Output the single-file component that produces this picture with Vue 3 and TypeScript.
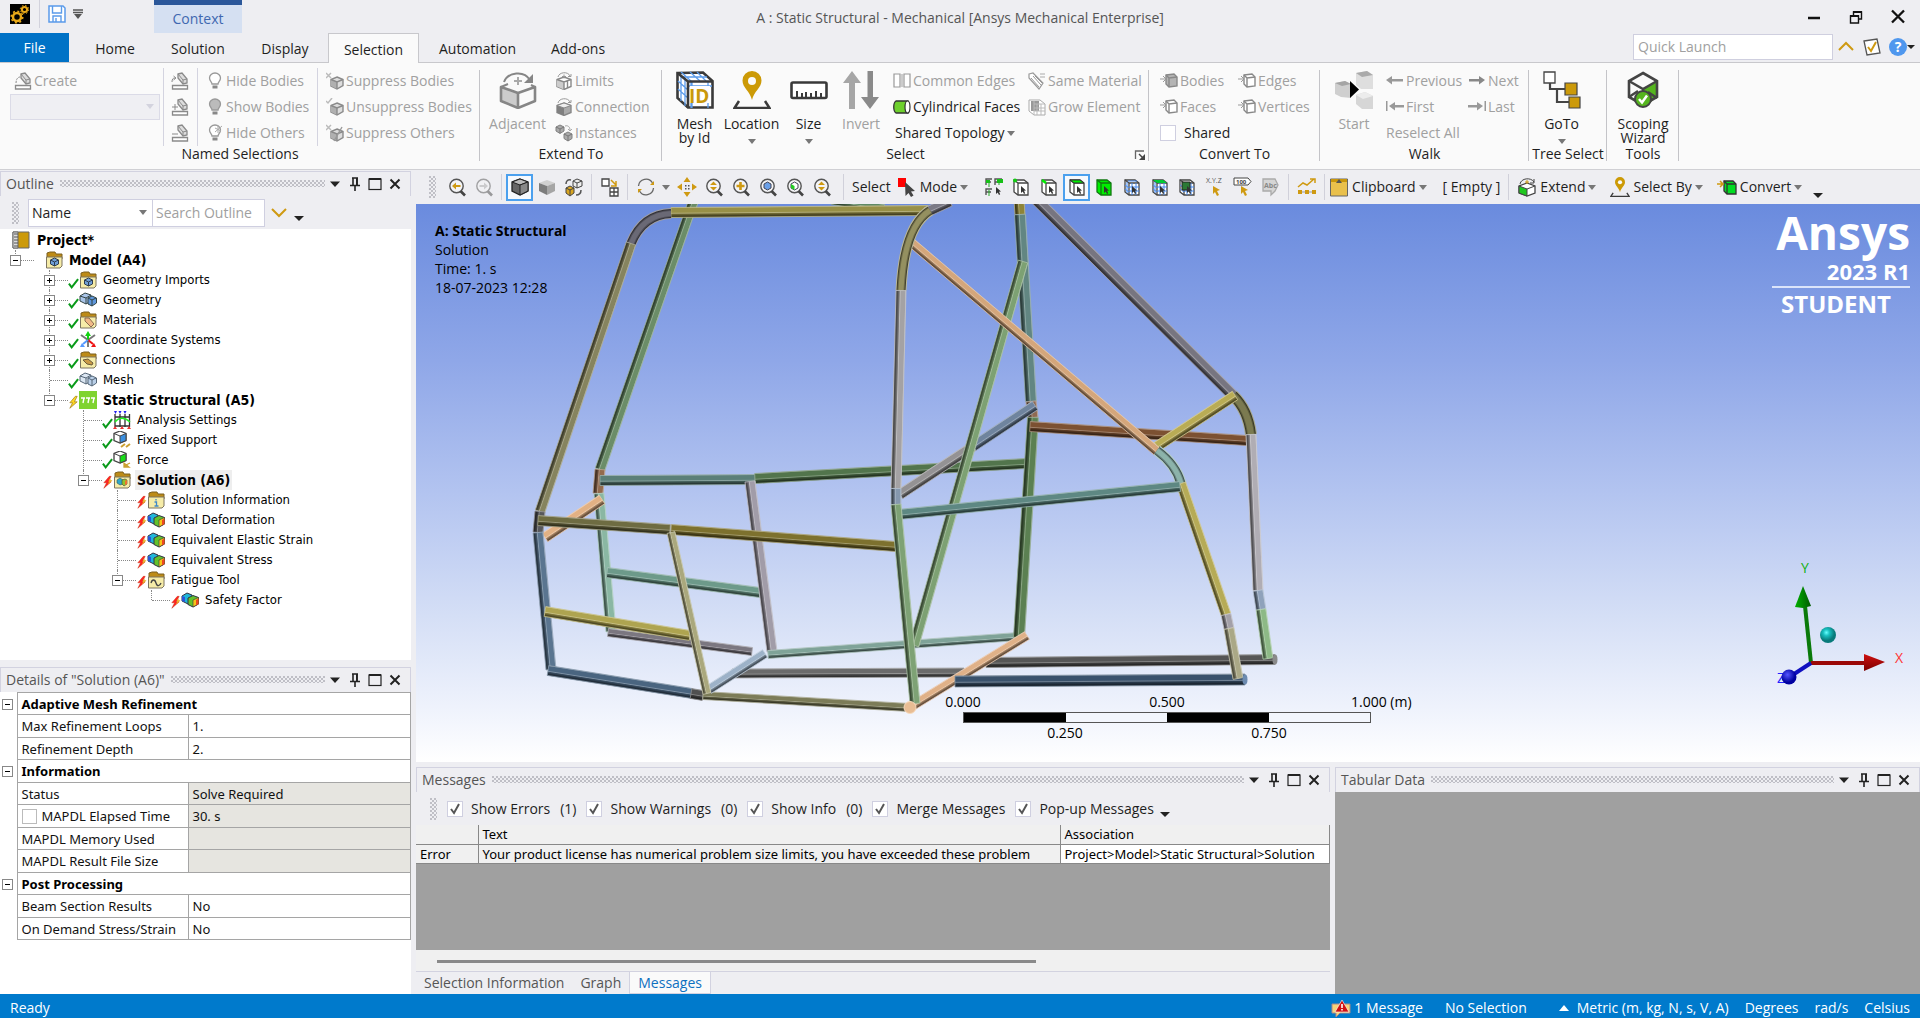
<script setup lang="ts">
import { ref } from 'vue'

interface TreeRow {
  label: string
  level: number
  icon: string
  status?: 'ok' | 'bolt' | 'pend'
  exp?: '+' | '-'
  last?: boolean
  bold?: boolean
  selected?: boolean
}

const tree: TreeRow[] = [
  { label: 'Model (A4)', level: 1, icon: 'folder-cube', exp: '-', last: true, bold: true },
  { label: 'Geometry Imports', level: 2, icon: 'folder-cube', status: 'ok', exp: '+' },
  { label: 'Geometry', level: 2, icon: 'geom', status: 'ok', exp: '+' },
  { label: 'Materials', level: 2, icon: 'folder-mat', status: 'ok', exp: '+' },
  { label: 'Coordinate Systems', level: 2, icon: 'coord', status: 'ok', exp: '+' },
  { label: 'Connections', level: 2, icon: 'folder-conn', status: 'ok', exp: '+' },
  { label: 'Mesh', level: 2, icon: 'mesh', status: 'ok' },
  { label: 'Static Structural (A5)', level: 2, icon: 'static', status: 'pend', exp: '-', last: true, bold: true },
  { label: 'Analysis Settings', level: 3, icon: 'settings', status: 'ok' },
  { label: 'Fixed Support', level: 3, icon: 'fixed', status: 'ok' },
  { label: 'Force', level: 3, icon: 'force', status: 'ok' },
  { label: 'Solution (A6)', level: 3, icon: 'folder-sol', status: 'bolt', exp: '-', last: true, bold: true, selected: true },
  { label: 'Solution Information', level: 4, icon: 'folder-info', status: 'bolt' },
  { label: 'Total Deformation', level: 4, icon: 'result', status: 'bolt' },
  { label: 'Equivalent Elastic Strain', level: 4, icon: 'result', status: 'bolt' },
  { label: 'Equivalent Stress', level: 4, icon: 'result', status: 'bolt' },
  { label: 'Fatigue Tool', level: 4, icon: 'folder-fat', status: 'bolt', exp: '-', last: true },
  { label: 'Safety Factor', level: 5, icon: 'result', status: 'bolt', last: true },
]

interface Detail { label: string; value?: string; group?: boolean; ro?: boolean; check?: boolean }
const details: Detail[] = [
  { label: 'Adaptive Mesh Refinement', group: true },
  { label: 'Max Refinement Loops', value: '1.' },
  { label: 'Refinement Depth', value: '2.' },
  { label: 'Information', group: true },
  { label: 'Status', value: 'Solve Required', ro: true },
  { label: 'MAPDL Elapsed Time', value: '30. s', ro: true, check: true },
  { label: 'MAPDL Memory Used', value: '', ro: true },
  { label: 'MAPDL Result File Size', value: '', ro: true },
  { label: 'Post Processing', group: true },
  { label: 'Beam Section Results', value: 'No' },
  { label: 'On Demand Stress/Strain', value: 'No' },
]

const tabs = ['Home', 'Solution', 'Display', 'Selection', 'Automation', 'Add-ons']
const activeTab = ref('Selection')

const filters = ref([
  { label: 'Show Errors', count: '(1)', on: true },
  { label: 'Show Warnings', count: '(0)', on: true },
  { label: 'Show Info', count: '(0)', on: true },
  { label: 'Merge Messages', count: '', on: true },
  { label: 'Pop-up Messages', count: '', on: true },
])

const pickIcons = ['f-multi', 'f-vertex', 'f-edge', 'f-face', 'f-body', 'f-node', 'f-elface', 'f-elem', 'f-xyz', 'f-label', 'f-abc']

type RGB = [number, number, number]
interface Tube { a: [number, number]; b: [number, number]; w: number; c: string; mid?: [number, number] }

const t = (x1: number, y1: number, x2: number, y2: number, c: string, w = 10): Tube => ({ a: [x1, y1], b: [x2, y2], c, w })
const bend = (x1: number, y1: number, cx: number, cy: number, x2: number, y2: number, c: string, w = 10): Tube => ({ a: [x1, y1], b: [x2, y2], mid: [cx, cy], c, w })

/* Frame members, listed from the farthest to the nearest. */
const tubes: Tube[] = [
  t(694, 200, 600, 470, '#6b8d68'),
  t(832, 201, 884, 209, '#5f8a66', 8),
  t(600, 470, 598, 494, '#936b4e'),
  t(599, 494, 611, 632, '#8ab7a3'),
  t(608, 633, 752, 652, '#7b7780', 8),
  t(600, 481, 755, 480, '#5b7f78'),
  t(755, 479, 1026, 464, '#52754c'),
  t(607, 573, 760, 593, '#6d9a8a'),
  t(750, 482, 772, 652, '#a19ca8'),
  t(768, 655, 1018, 637, '#7fa398', 8),
  t(732, 674, 964, 673, '#6b6b6b', 9),
  t(545, 538, 602, 500, '#e2b184'),
  t(1019, 200, 1020, 215, '#8d8438'),
  t(1020, 215, 1031, 402, '#628682', 11),
  t(1031, 402, 1033, 418, '#8e6a52'),
  t(1033, 418, 1019, 638, '#5b8052', 11),
  t(1030, 427, 1247, 441, '#7c5132'),
  t(1036, 200, 1233, 396, '#777580', 11),
  t(973, 447, 1035, 406, '#6f849e'),
  t(900, 495, 973, 447, '#949294'),
  t(1023, 262, 914, 646, '#7da173'),
  t(986, 663, 1275, 660, '#565656', 10),
  t(910, 708, 1027, 636, '#e0b188', 9),
  t(955, 682, 1245, 680, '#3a526c', 11),
  bend(1233, 396, 1248, 410, 1251, 435, '#7b7a50', 11),
  t(1251, 435, 1258, 591, '#b0adb4'),
  t(1258, 591, 1261, 610, '#8fa2bb'),
  t(1261, 610, 1268, 659, '#8db986'),
  t(1157, 447, 1235, 396, '#b9ac55'),
  t(910, 242, 1157, 452, '#d4a67b', 9),
  bend(1157, 451, 1176, 465, 1181, 484, '#8cb3aa'),
  t(1181, 484, 1226, 615, '#b6ab57'),
  t(1226, 615, 1229, 629, '#a3a0a8'),
  t(1229, 629, 1238, 679, '#aaa886'),
  t(898, 515, 1180, 487, '#5e8883'),
  t(671, 213, 928, 211, '#989047'),
  bend(671, 214, 643, 215, 631, 244, '#6a6975'),
  t(631, 244, 540, 512, '#86845f'),
  t(540, 512, 538, 533, '#57585c'),
  t(538, 533, 551, 670, '#5a7590'),
  t(548, 671, 692, 694, '#4a6580'),
  t(691, 694, 703, 696, '#505050'),
  t(703, 696, 909, 708, '#7c7c58', 8),
  t(538, 521, 670, 530, '#6e6c42'),
  t(671, 530, 896, 547, '#7d712e'),
  t(545, 612, 690, 636, '#aea450'),
  t(709, 690, 765, 654, '#9db2c8', 9),
  t(671, 533, 707, 694, '#aaa87d', 8),
  t(926, 213, 950, 202, '#7b7a86'),
  bend(930, 211, 904, 227, 901, 291, '#949060'),
  t(901, 291, 896, 489, '#a4a2a4'),
  t(896, 489, 896, 505, '#8598ae'),
  t(896, 505, 915, 704, '#7ea275'),
]

const rgb = (h: string): RGB => [1, 3, 5].map((i) => parseInt(h.slice(i, i + 2), 16)) as RGB
const shade = (h: string, f: number): string => {
  const [r, g, b] = rgb(h).map((v) => Math.round(f < 1 ? v * f : v + (255 - v) * (f - 1)))
  return `rgb(${r},${g},${b})`
}

const members = tubes.map((m, i) => {
  const dx = m.b[0] - m.a[0]
  const dy = m.b[1] - m.a[1]
  const len = Math.hypot(dx, dy)
  let nx = -dy / len
  let ny = dx / len
  if (nx - ny < 0) { nx = -nx; ny = -ny }
  const h = m.w / 2
  return {
    id: `tube${i}`,
    w: m.w,
    curve: m.mid ? `M${m.a[0]} ${m.a[1]}Q${m.mid[0]} ${m.mid[1]} ${m.b[0]} ${m.b[1]}` : '',
    poly: [
      [m.a[0] + nx * h, m.a[1] + ny * h], [m.b[0] + nx * h, m.b[1] + ny * h],
      [m.b[0] - nx * h, m.b[1] - ny * h], [m.a[0] - nx * h, m.a[1] - ny * h],
    ].map((p) => p.map((v) => v.toFixed(1)).join(',')).join(' '),
    g1: [m.a[0] - nx * h, m.a[1] - ny * h],
    g2: [m.a[0] + nx * h, m.a[1] + ny * h],
    main: m.c,
    dark: shade(m.c, 0.46),
    mid: shade(m.c, 0.75),
    lite: shade(m.c, 1.28),
    edge: shade(m.c, 1.35),
  }
})
</script>

<template>
  <div class="app">
    <svg class="defs" aria-hidden="true">
      <symbol id="ns-base" viewBox="0 0 18 18"><path d="M1.500 13.500h15v3.500h-15Z" fill="#fff" stroke="#8a8a8a" stroke-width="1.300" /><path d="M7 2l4-1 5 6v4l-4 1-5-6Z" fill="#ddd" stroke="#8a8a8a" stroke-width="1.300" /><path d="M7 2l5 6 4-1M12 8v4" stroke="#8a8a8a" fill="none" /></symbol>
      <symbol id="ns-create" viewBox="0 0 18 18"><use href="#ns-base" width="18" height="18" /><path d="M2 11c0-4 2-6 4-6" stroke="#8a8a8a" fill="none" stroke-dasharray="2 1" /></symbol>
      <symbol id="ns-add1" viewBox="0 0 18 18"><use href="#ns-base" width="18" height="18" /><path d="M1 10c0-3 1-4 3-4M2.500 4l2.500 2-2.500 2" stroke="#8a8a8a" fill="none" /></symbol>
      <symbol id="ns-plus" viewBox="0 0 18 18"><use href="#ns-base" width="18" height="18" /><path d="M1 9h6M4 6v6" stroke="#8a8a8a" fill="none" /></symbol>
      <symbol id="ns-minus" viewBox="0 0 18 18"><use href="#ns-base" width="18" height="18" /><path d="M1 10h6" stroke="#8a8a8a" fill="none" /></symbol>
      <symbol id="bulb" viewBox="0 0 18 18"><path d="M6 12c0-2-2.500-3-2.500-6a5.500 5 0 0 1 11 0c0 3-2.500 4-2.500 6Z" fill="#fff" stroke="#999" stroke-width="1.300" /><path d="M6.500 13.500h5v3h-5Z" fill="#888" /></symbol>
      <symbol id="bulb-on" viewBox="0 0 18 18"><path d="M6 12c0-2-2.500-3-2.500-6a5.500 5 0 0 1 11 0c0 3-2.500 4-2.500 6Z" fill="#bbb" stroke="#999" stroke-width="1.300" /><path d="M6.500 13.500h5v3h-5Z" fill="#888" /></symbol>
      <symbol id="bulb-x" viewBox="0 0 18 18"><use href="#bulb" width="18" height="18" /><path d="M9 8l7-6M9 4l6 3M12 1v8" stroke="#aaa" /></symbol>
      <symbol id="sup-base" viewBox="0 0 18 18"><path d="M11 5l6 2.500v6L11 17l-6-3V7.500Z" fill="#ddd" stroke="#8a8a8a" stroke-width="1.400" /><path d="M5 7.500l6 2.500v7l-6-3Z" fill="#b0b0b0" /><path d="M5 7.500l6 2.500 6-2.500M11 10v7" fill="none" stroke="#8a8a8a" stroke-width="1.400" /></symbol>
      <symbol id="sup" viewBox="0 0 18 18"><use href="#sup-base" width="18" height="18" /><path d="M0 1l5 5M5 1L0 6" stroke="#bbb" stroke-width="1.500" /></symbol>
      <symbol id="unsup" viewBox="0 0 18 18"><use href="#sup-base" width="18" height="18" /><path d="M0 3l2 2 4-5" fill="none" stroke="#bbb" stroke-width="1.500" /></symbol>
      <symbol id="supo" viewBox="0 0 18 18"><use href="#sup-base" width="18" height="18" /><path d="M8 17l8-14" stroke="#999" stroke-width="1.400" /><path d="M0 1l5 5M5 1L0 6" stroke="#bbb" stroke-width="1.500" /></symbol>
      <symbol id="limits" viewBox="0 0 18 18"><path d="M9 5l7 2.500v7L9 17.500l-7-3v-7Z" fill="#fff" stroke="#888" stroke-width="1.400" /><path d="M2 7.500L9 10v7.500l-7-3Z" fill="#ccc" /><path d="M2 7.500L9 10l7-2.500M9 10v7M12.500 9v7" fill="none" stroke="#888" stroke-width="1.400" /><path d="M3 5c1-5 10-6 12-1M13 4.500h3V2M9 2.500v4M7 4.500h4" fill="none" stroke="#999" /></symbol>
      <symbol id="conn" viewBox="0 0 18 18"><path d="M9 5l7 2.500v7L9 17.500l-7-3v-7Z" fill="#aaa" stroke="#888" stroke-width="1.400" /><path d="M2 7.500L9 10v7.500l-7-3Z" fill="#808080" /><path d="M2 7.500L9 5l7 2.500L9 10Z" fill="#eee" stroke="#888" /><path d="M3 5c1-5 10-6 12-1M13 4.500h3V2" fill="none" stroke="#999" /></symbol>
      <symbol id="inst" viewBox="0 0 18 18"><path d="M5 1l4 2v4L5 9.500 1 7V3Z" fill="#aaa" stroke="#808080" /><path d="M13 8l4 2v4.500l-4 2.500-4-2.500V10Z" fill="#aaa" stroke="#808080" /><path d="M1 3l4 2 4-2M5 5v4M9 10l4 2 4-2M13 12v5" fill="none" stroke="#777" /><path d="M10 2c3-1 5 1 5 4M13 5l2 2 2-2" fill="none" stroke="#aaa" /></symbol>
      <symbol id="adj" viewBox="0 0 38 38"><path d="M2 16l17 6v15L2 30Z" fill="#ccc" /><path d="M2 16l17 6 17-6v14l-17 7L2 30Z" fill="none" stroke="#868686" stroke-width="2.600" stroke-linejoin="round" /><path d="M19 22v14" stroke="#868686" stroke-width="2.600" /><path d="M2 16l7-3M36 16l-4-2" stroke="#868686" stroke-width="2" /><path d="M5 11C9 1 25-1 31 9" fill="none" stroke="#868686" stroke-width="2" /><path d="M34 3v9h-9Z" fill="#868686" /><path d="M19 6v8M15 10h8" stroke="#aaa" stroke-width="2" /></symbol>
      <symbol id="loc" viewBox="0 0 38 38"><path d="M19 0a9.500 9.500 0 0 1 9.500 9.500C28.500 17 21 20 19 29 17 20 9.500 17 9.500 9.500A9.500 9.500 0 0 1 19 0Z" fill="#cc9a06" /><circle cx="19" cy="10" r="4" fill="#fafafa" /><path d="M6 30 1.500 37h35L32 30" fill="none" stroke="#3a3a3a" stroke-width="2.500" /></symbol>
      <symbol id="size" viewBox="0 0 38 38"><rect x="1.500" y="11.500" width="35" height="15.500" rx="1.500" fill="#fff" stroke="#3a3a3a" stroke-width="2.600" /><path d="M7 26v-6M12 26v-4M16 26v-5M21 26v-4M26 26v-6M31 26v-4" stroke="#3a3a3a" stroke-width="2" /></symbol>
      <symbol id="invert" viewBox="0 0 38 38"><path d="M10 0l9 12h-6v26H7V12H1Z" fill="#a6a6a6" /><path d="M28 38l9-12h-6V0h-5.500v26H19Z" fill="#8a8a8a" /></symbol>
      <symbol id="cedge" viewBox="0 0 18 18"><path d="M1 2h6v13H1ZM11 2h6v13h-6Z" fill="#fff" stroke="#999" stroke-width="1.200" /><path d="M8 2h2v13H8Z" fill="#ccc" /></symbol>
      <symbol id="cyl" viewBox="0 0 18 18"><path d="M3 3h12v12H3C0 13 0 5 3 3Z" fill="#6ed02d" stroke="#333" stroke-width="1.300" /><ellipse cx="14.500" cy="9" rx="2.500" ry="6" fill="#fff" stroke="#333" stroke-width="1.200" /></symbol>
      <symbol id="smat" viewBox="0 0 18 18"><path d="M1 2l4-1 10 10-4 6L1 6Z" fill="#fff" stroke="#999" stroke-width="1.200" /><path d="M3 6l8 9M5 4l8 9M7 4l7 7" stroke="#999" /><path d="M12 2h5M12 5h5" stroke="#aaa" /></symbol>
      <symbol id="grow" viewBox="0 0 18 18"><path d="M1 2h11l5 4v11H6L1 13Z" fill="#fff" stroke="#aaa" /><path d="M3 3h8v10H3Z" fill="#999" /><path d="M6 6h11M6 10h11M6 13h11M9 6v11M13 6v11M6 3v14" stroke="#bbb" fill="none" /></symbol>
      <symbol id="cv-body" viewBox="0 0 18 18"><path d="M6 3l8-1 3 3v9l-8 1-3-3Z" fill="#b4b4b4" stroke="#888" stroke-width="1.400" /><path d="M6 3l3 3 8-1M9 6v9" fill="none" stroke="#888" stroke-width="1.400" /><path d="M0 7h5M3 4l3 3-3 3" stroke="#999" fill="none" /></symbol>
      <symbol id="cv-wire" viewBox="0 0 18 18"><path d="M6 3l8-1 3 3v9l-8 1-3-3Z" fill="#fff" stroke="#888" stroke-width="1.400" /><path d="M6 3l3 3 8-1M9 6v9" fill="none" stroke="#888" stroke-width="1.400" /><path d="M0 7h5M3 4l3 3-3 3" stroke="#999" fill="none" /></symbol>
      <symbol id="start" viewBox="0 0 38 38"><path d="M0 12l10-2 6 3v14l-10-1-6-3Z" fill="#cfcfcf" /><path d="M0 12l10-2 6 3-9 2Z" fill="#a5a5a5" /><path d="M21 2l11-2 6 4v14H26l-5-4Z" fill="#dedede" /><path d="M21 2l11-2 6 4-11 2Z" fill="#aaa" /><path d="M21 24l9-3 8 4v13H27l-6-5Z" fill="#d6d6d6" /><path d="M21 24l9-3 8 4-10 3Z" fill="#ececec" /><path d="M15 10l9 8.500L15 27Z" fill="#000" /></symbol>
      <symbol id="a-left" viewBox="0 0 18 18"><path d="M0 8l6-4v3h11v2.500H6v3Z" fill="#999" /></symbol>
      <symbol id="a-right" viewBox="0 0 18 18"><path d="M17 8l-6-4v3H1v2.500h10v3Z" fill="#888" /></symbol>
      <symbol id="a-first" viewBox="0 0 18 18"><path d="M3 8l6-4v3h9v2.500H9v3ZM0 3h1.500v10H0Z" fill="#999" /></symbol>
      <symbol id="a-last" viewBox="0 0 18 18"><path d="M15 8L9 4v3H0v2.500h9v3ZM16.500 3H18v10h-1.500Z" fill="#999" /></symbol>
      <symbol id="goto" viewBox="0 0 38 38"><path d="M7 12v6h16M14 18v13h13" fill="none" stroke="#444" stroke-width="2.200" /><path d="M1 1h11v11H1Z" fill="#fff" stroke="#444" stroke-width="1.300" /><path d="M22 12h12v12H22ZM26 26h11v11H26Z" fill="#cc9a0a" stroke="#444" stroke-width="1.200" /></symbol>
      <symbol id="wiz" viewBox="0 0 38 38"><path d="M19 17l14-6v14l-7 7-7-5Z" fill="#55b51e" /><path d="M19 2l14 8v16l-14 8-14-8V10Z" fill="none" stroke="#444" stroke-width="2.600" /><path d="M5 10l14 8 14-8M19 18v8M5 26l9-6M24 21l9 6" fill="none" stroke="#444" stroke-width="2.400" /><circle cx="19" cy="28" r="8" fill="#55b51e" stroke="#444" stroke-width="2" /><path d="M15 28l3 3.500 5-7" fill="none" stroke="#fff" stroke-width="2.500" /></symbol>

      <symbol id="folder" viewBox="0 0 18 18"><path d="M2 2l3-1h5l1 2h6v5H2Z" fill="#bd8b17" stroke="#7d6120" /><path d="M1.500 6h15.500v9l-2 2H1.500Z" fill="#f6eca8" stroke="#7d7560" /></symbol>
      <symbol id="folder-cube" viewBox="0 0 18 18"><use href="#folder" width="18" height="18" /><path d="M9.500 7l4 2v4l-4 2-4-2V9Z" fill="#6f9fd8" stroke="#2e3d50" /><path d="M5.500 9l4 2 4-2M9.500 11v4" fill="none" stroke="#2e3d50" /></symbol>
      <symbol id="folder-mat" viewBox="0 0 18 18"><use href="#folder" width="18" height="18" /><path d="M6 7l4 0 5 6-3 3-6-6Z" fill="#f0b987" stroke="#8a6b50" /></symbol>
      <symbol id="folder-conn" viewBox="0 0 18 18"><use href="#folder" width="18" height="18" /><path d="M4 9l5-1 5 4-1 2-5-1Z" fill="#c99b48" stroke="#6b5b3a" /></symbol>
      <symbol id="folder-sol" viewBox="0 0 18 18"><use href="#folder" width="18" height="18" /><path d="M4 9l3-2 3 2v4l-3 1-3-2Z" fill="#2fa7c9" stroke="#355" stroke-width=".6" /><path d="M9 9l3-1 2 1v4l-3 2-2-2Z" fill="#8fc32d" stroke="#443" stroke-width=".6" /><path d="M12 10l2-1v4l-2 1Z" fill="#f07030" /></symbol>
      <symbol id="folder-info" viewBox="0 0 18 18"><use href="#folder" width="18" height="18" /><path d="M9 8v1.500M7.500 11H9.500v4M7.500 15h4" fill="none" stroke="#4088c8" stroke-width="1.300" /></symbol>
      <symbol id="folder-fat" viewBox="0 0 18 18"><use href="#folder" width="18" height="18" /><path d="M4 12c1-4 4-4 5 0s4 3 5 0" fill="none" stroke="#444" stroke-width="1.300" /></symbol>
      <symbol id="geom" viewBox="0 0 18 18"><path d="M1 5l5-3 6 2v6l-5 3-6-3Z" fill="#a9c4e8" stroke="#344" /><path d="M9 7l4-2 4.500 2v5L13 15l-4-2Z" fill="#5f97dd" stroke="#344" /><path d="M1 5l6 2 5-3M7 7v6M9 7l4 2 4-2M13 9v6" fill="none" stroke="#344" /></symbol>
      <symbol id="mesh" viewBox="0 0 18 18"><path d="M1 5l5-3 6 2v6l-5 3-6-3Z" fill="#dbe6f2" stroke="#567" /><path d="M9 7l4-2 4.500 2v5L13 15l-4-2Z" fill="#b9cfe8" stroke="#567" /><path d="M1 5l6 2 5-3M7 7v6M9 7l4 2 4-2M13 9v6" fill="none" stroke="#567" /></symbol>
      <symbol id="coord" viewBox="0 0 18 18"><path d="M9 9l-7-5M9 9l7-5" stroke="#777" stroke-width="2" /><path d="M9 10V3" stroke="#13d313" stroke-width="2" /><path d="M6 5l3-5 3 5Z" fill="#13d313" /><path d="M9 9l5 4" stroke="#e11" stroke-width="2" /><path d="M17 16h-5l3-4Z" fill="#e11" /><path d="M9 9l-5 4" stroke="#59f" stroke-width="2" /><path d="M1 16h5l-3-4Z" fill="#59f" /><path d="M9 10v6" stroke="#555" stroke-width="1.500" /></symbol>
      <symbol id="static" viewBox="0 0 18 18"><rect width="18" height="18" fill="#7fd32f" /><path d="M2 7h4M7 7h4M12 7h4M5 7l-1 5M10 7l-1 5M15 7l-1 5" stroke="#fff" stroke-width="1.400" fill="none" /></symbol>
      <symbol id="settings" viewBox="0 0 18 18"><path d="M2 3v13M7 3v13M12 3v13M16.500 3v13M2 6h15M2 15h15" stroke="#333" stroke-width="1.300" fill="none" /><path d="M2 11c4-5 10-5 15 0" stroke="#2e2" stroke-width="1.500" fill="none" /><path d="M1 0h3L2.500 3ZM5.500 0h3L7 3ZM10.500 0h3L12 3Z" fill="#22e" /><path d="M0 18l2-3 2 3ZM14 18l2-3 2 3ZM7 18l2-3 2 3Z" fill="#e33" /></symbol>
      <symbol id="fixed" viewBox="0 0 18 18"><path d="M7 0l6 2.500v7L7 12 1 9.500v-7Z" fill="#fff" stroke="#444" stroke-width="1.300" /><path d="M7 5l6-2.500v7L7 12Z" fill="#3a8fe0" stroke="#444" /><path d="M1 2.500L7 5" stroke="#444" /><path d="M8 16l4-3M13 16l4-3" stroke="#cba030" stroke-width="2" /></symbol>
      <symbol id="force" viewBox="0 0 18 18"><path d="M7 0l6 2.500v7L7 12 1 9.500v-7Z" fill="#fff" stroke="#444" stroke-width="1.300" /><path d="M7 5l6-2.500v7L7 12Z" fill="#19dd19" stroke="#444" /><path d="M1 2.500L7 5" stroke="#444" /><path d="M17 12l-4 2M11 12v4h5Z" stroke="#cba030" stroke-width="1.300" fill="#cba030" /></symbol>
      <symbol id="result" viewBox="0 0 18 18"><path d="M1 5l5-3 5 2v7l-4 2-6-3Z" fill="#1fb6d8" stroke="#334" /><path d="M1 5l3 1v5l-3-1Z" fill="#2756d8" /><path d="M7 7l5-2.500 5.500 2V13L12 16l-5-2.500Z" fill="#62c22a" stroke="#334" /><path d="M12 9l5.500-2.500V13L12 16Z" fill="#f5c518" stroke="#334" stroke-width=".6" /><path d="M15 9l2.500-1.500V13L15 14.500Z" fill="#ee4a20" /></symbol>
      <symbol id="st-ok" viewBox="0 0 12 18"><path d="M1 13l3 4 7-9" fill="none" stroke="#0a9a1a" stroke-width="2.200" /></symbol>
      <symbol id="st-bolt" viewBox="0 0 12 18"><path d="M8 5L2 12h3l-3 6 8-7H7l3-6Z" fill="#f22" stroke="#c33010" stroke-width=".5" /><path d="M9 8l-1 2h2l-3 3" stroke="#e8b020" fill="none" stroke-width="1.200" /></symbol>
      <symbol id="st-pend" viewBox="0 0 12 18"><path d="M8 5L2 12h3l-3 6 8-7H7l3-6Z" fill="#ffd820" stroke="#a08020" stroke-width=".8" /></symbol>

      <symbol id="pin" viewBox="0 0 18 18"><path d="M6 3h6M7 3v7M11 3v7M4 10.500h10M9 11v5" fill="none" stroke="#222" stroke-width="1.600" /><path d="M10 3h1.800v7H10Z" fill="#222" /></symbol>
      <symbol id="max" viewBox="0 0 18 18"><rect x="3" y="4" width="12" height="10.500" fill="none" stroke="#222" stroke-width="1.200" /><path d="M3 4h12" stroke="#222" stroke-width="2" /></symbol>
      <symbol id="close" viewBox="0 0 18 18"><path d="M4.500 4.500l9 9M13.500 4.500l-9 9" stroke="#222" stroke-width="2" /></symbol>
      <symbol id="tri" viewBox="0 0 18 18"><path d="M4 6.500h10L9 12Z" fill="#222" /></symbol>

      <symbol id="lens" viewBox="0 0 20 20"><circle cx="9.500" cy="9" r="6.700" fill="#f4f4f6" stroke="#555" stroke-width="1.400" /><path d="M13.500 14l4.500 4.500" stroke="#444" stroke-width="2.600" /></symbol>
      <symbol id="z-prev" viewBox="0 0 20 20"><use href="#lens" width="20" height="20" /><path d="M5 9l4-3.500V8h4.500v2H9v2.500Z" fill="#cf9a12" /></symbol>
      <symbol id="z-next" viewBox="0 0 20 20"><g opacity=".5"><use href="#lens" width="20" height="20" /><path d="M14 9l-4-3.500V8H5.500v2H10v2.500Z" fill="#aaa" /></g></symbol>
      <symbol id="z-zoom" viewBox="0 0 20 20"><use href="#lens" width="20" height="20" /><path d="M6 8l3.500-3.500L13 8ZM6 10h7l-3.500 3.500Z" fill="#cf9a12" /></symbol>
      <symbol id="z-in" viewBox="0 0 20 20"><use href="#lens" width="20" height="20" /><path d="M9.500 5v8M5.500 9h8" stroke="#cf9a12" stroke-width="2.600" /></symbol>
      <symbol id="z-fit" viewBox="0 0 20 20"><use href="#lens" width="20" height="20" /><path d="M9.500 5l3.500 2v4l-3.500 2L6 11V7Z" fill="#6aa0e8" stroke="#445" /></symbol>
      <symbol id="z-sel" viewBox="0 0 20 20"><use href="#lens" width="20" height="20" /><path d="M9.500 5l3.500 2v4l-3.500 2L6 11V7Z" fill="#fff" stroke="#445" /><path d="M6 7l3.500 2v4L6 11Z" fill="#2c2" /></symbol>
      <symbol id="v-shade" viewBox="0 0 20 20"><path d="M10 2l8 3v9l-8 4-8-4V5Z" fill="#666" stroke="#222" stroke-width="1.300" /><path d="M2 5l8 3 8-3-8-3Z" fill="#bbb" stroke="#222" /><path d="M10 8l8-3v9l-8 4Z" fill="#888" stroke="#222" /></symbol>
      <symbol id="v-solid" viewBox="0 0 20 20"><path d="M10 3l8 3-8 3-8-3Z" fill="#d0d0d0" /><path d="M2 6l8 3v9l-8-4Z" fill="#7c7c7c" /><path d="M18 6l-8 3v9l8-4Z" fill="#a5a5a5" /></symbol>
      <symbol id="v-iso" viewBox="0 0 20 20"><path d="M13 2l5 2v5l-5 2-4-2V4Z" fill="#eee" stroke="#444" /><path d="M6 9l4 2v5l-4 3-4-3v-5Z" fill="#d9a520" stroke="#444" /><path d="M2 11l4 2 4-2M6 13v5M9 4l4 2 5-2M13 6v5" fill="none" stroke="#444" /><path d="M2 7c0-3 2-5 5-4M17 13c0 3-2 5-5 5" fill="none" stroke="#555" stroke-width="1.500" /></symbol>
      <symbol id="v-split" viewBox="0 0 20 20"><path d="M2 2h7v7H2Z" fill="#fff" stroke="#444" stroke-width="1.300" /><path d="M10 11h8v8h-8ZM14 11v8M10 15h8" fill="#fff" stroke="#444" stroke-width="1.300" /><path d="M11 3l5 5M16 4v5h-5" stroke="#cf9a12" stroke-width="1.500" fill="none" /></symbol>
      <symbol id="v-rot" viewBox="0 0 20 20"><path d="M2.500 9a7.500 7.500 0 0 1 14-3M17.500 11a7.500 7.500 0 0 1-14 3" fill="none" stroke="#666" stroke-width="1.300" /><path d="M18 4v4h-4ZM2 16v-4h4Z" fill="#cf9a12" /></symbol>
      <symbol id="v-pan" viewBox="0 0 20 20"><path d="M10 0l3.500 5h-7ZM10 20l3.500-5h-7ZM0 10l5-3.500v7ZM20 10l-5-3.500v7Z" fill="#cf9a12" /><path d="M8 8h1.500v1.500H8ZM11 8h1.500v1.500H11ZM8 11h1.500v1.500H8ZM11 11h1.500v1.500H11Z" fill="#555" /></symbol>
      <symbol id="v-mode" viewBox="0 0 20 20"><path d="M1 1h8v9H1Z" fill="#f00" /><path d="M8 5l10 9-4 .500 2.500 4-2.500 1.500-2.500-4-3 3Z" fill="#444" /></symbol>

      <symbol id="fbox" viewBox="0 0 20 20"><path d="M3 3h10l4 3v12H7l-4-3Z" fill="#fff" stroke="#444" stroke-width="1.300" /><path d="M3 3l4 3h10M7 6v12" fill="none" stroke="#444" stroke-width="1.300" /></symbol>
      <symbol id="fcur" viewBox="0 0 20 20"><path d="M10 9l5 4.500-2 .300 1.200 2.500-1.200.700-1.300-2.500L10 16Z" fill="#333" /></symbol>
      <symbol id="f-multi" viewBox="0 0 20 20"><path d="M2 8V2h6M2 18v-6h6M2 5h5M2 15h5M11 8V2h7M11 5h4" stroke="#555" fill="none" stroke-width="1.400" /><path d="M2 3h4v3H2ZM13 2h6v4h-6Z" fill="#16c016" /><path d="M5 5v5M5 13v6M15 5v3" stroke="#2a2" /><use href="#fcur" x="2" y="1" width="20" height="20" /></symbol>
      <symbol id="f-vertex" viewBox="0 0 20 20"><use href="#fbox" width="20" height="20" /><use href="#fcur" width="20" height="20" /><circle cx="4" cy="3.500" r="2" fill="#1c1" /></symbol>
      <symbol id="f-edge" viewBox="0 0 20 20"><use href="#fbox" width="20" height="20" /><use href="#fcur" width="20" height="20" /><path d="M3 3l4 3" stroke="#0e0" stroke-width="2.500" /></symbol>
      <symbol id="f-face" viewBox="0 0 20 20"><use href="#fbox" width="20" height="20" /><path d="M3 3h10l4 3H7Z" fill="#0e0" stroke="#333" /><use href="#fcur" width="20" height="20" /></symbol>
      <symbol id="f-body" viewBox="0 0 20 20"><path d="M3 3h10l4 3v12H7l-4-3Z" fill="#0e0" stroke="#171" stroke-width="1.300" /><path d="M3 3l4 3h10M7 6v12" fill="none" stroke="#171" stroke-width="1.300" /><use href="#fcur" width="20" height="20" /></symbol>
      <symbol id="f-node" viewBox="0 0 20 20"><use href="#fbox" width="20" height="20" /><path d="M7 10h10M7 14h10M10 6v12M14 6v12M5 5v11M3 8l4 3M3 12l4 3M6 4h9" stroke="#48e" fill="none" /><use href="#fcur" width="20" height="20" /></symbol>
      <symbol id="f-elface" viewBox="0 0 20 20"><use href="#fbox" width="20" height="20" /><path d="M3 3h10l4 3H7Z" fill="#0c3" /><path d="M7 10h10M7 14h10M10 6v12M14 6v12M5 5v11M3 8l4 3M3 12l4 3" stroke="#48e" fill="none" /><use href="#fcur" width="20" height="20" /></symbol>
      <symbol id="f-elem" viewBox="0 0 20 20"><use href="#fbox" width="20" height="20" /><path d="M7 10h10M7 14h10M10 6v12M14 6v12M3 8l4 3M3 12l4 3" stroke="#48e" fill="none" /><path d="M5 5h8v8H5Z" fill="#2b7a35" stroke="#222" /><use href="#fcur" width="20" height="20" /></symbol>
      <symbol id="chart" viewBox="0 0 20 20"><path d="M1 10l5-4 4 2 7-6M13 2h5v4" fill="none" stroke="#cf9a12" stroke-width="1.500" /><path d="M1 15h18" stroke="#999" /><path d="M1 13h4v4H1ZM8 13h4v4H8ZM15 13h4v4h-4Z" fill="#cf9a12" /></symbol>
      <symbol id="clip" viewBox="0 0 20 20"><path d="M1.500 2h17v17h-17Z" fill="#e9c04c" stroke="#666" /><path d="M2 2h16v3H2Z" fill="#c8960c" /><path d="M10 2l3 4H7Z" fill="#555" /></symbol>
      <symbol id="ext" viewBox="0 0 20 20"><path d="M10 6l8 3v7l-8 3-8-3V9Z" fill="#fff" stroke="#444" stroke-width="1.300" /><path d="M2 9l8 3v7l-8-3Z" fill="#1fc81f" stroke="#444" /><path d="M10 12l8-3" stroke="#444" /><path d="M3 7c1-6 11-7 14-2M17 2v4h-4" fill="none" stroke="#444" /><path d="M10 3v4M8 5h4" stroke="#cf9a12" /></symbol>
      <symbol id="conv" viewBox="0 0 20 20"><path d="M7 4h9l3 3v10h-9l-3-3Z" fill="#0d2" stroke="#333" stroke-width="1.300" /><path d="M7 4l3 3h9M10 7v10" fill="none" stroke="#333" stroke-width="1.300" /><path d="M0 7h6M3 4l3 3-3 3" stroke="#cf9a12" fill="none" stroke-width="1.500" /></symbol>
    </svg>

    <header class="head">
      <div class="titlebar">
        <div class="quick">
          <svg class="logo" viewBox="0 0 20 20"><rect width="20" height="20" /><circle cx="7" cy="13" r="4" fill="none" stroke="#e8a818" stroke-width="2.500" /><circle cx="7" cy="13" r="5.800" fill="none" stroke="#e8a818" stroke-width="1.500" stroke-dasharray="2 2.500" /><circle cx="14.500" cy="5.500" r="2.600" fill="none" stroke="#e8a818" stroke-width="2" /><circle cx="14.500" cy="5.500" r="4.200" fill="none" stroke="#e8a818" stroke-dasharray="1.600 1.700" /></svg>
          <i class="qsep"></i>
          <button class="plain" aria-label="Save"><svg class="i18" viewBox="0 0 18 18"><path d="M1 1h14l2 2v14H1Z" fill="#fff" stroke="#5b9bea" stroke-width="1.500" /><path d="M4.500 1v7h9V1M5 17v-6h8v6M8 13v4" fill="none" stroke="#5b9bea" stroke-width="1.400" /></svg></button>
          <button class="plain" aria-label="Customize"><svg class="i12" viewBox="0 0 12 12"><path d="M1 2h10M1 4.500h10" stroke="#555" stroke-width="1.300" /><path d="M2 6h8l-4 5Z" fill="#555" /></svg></button>
        </div>
        <div class="context">Context</div>
        <h1>A : Static Structural - Mechanical [Ansys Mechanical Enterprise]</h1>
        <div class="winbtns">
          <button aria-label="Minimize"><svg viewBox="0 0 18 18"><path d="M3 10h12" stroke="#111" stroke-width="2.500" /></svg></button>
          <button aria-label="Restore"><svg viewBox="0 0 18 18"><path d="M3.500 8h8v7h-8ZM6.500 8V4h8v7h-3" fill="none" stroke="#111" stroke-width="1.400" /><path d="M3 8h9M6 4h9" stroke="#111" stroke-width="2" /></svg></button>
          <button aria-label="Close"><svg viewBox="0 0 18 18"><path d="M3 2.500l12 12M15 2.500l-12 12" stroke="#111" stroke-width="2.300" /></svg></button>
        </div>
      </div>
      <nav class="tabs">
        <button class="file">File</button>
        <button v-for="tab in tabs" :key="tab" class="tab" :class="[tab.toLowerCase(), { on: activeTab === tab }]" @click="activeTab = tab">{{ tab }}</button>
        <div class="launch">
          <input type="text" placeholder="Quick Launch" aria-label="Quick Launch" />
          <button class="plain" aria-label="Collapse ribbon"><svg class="i18" viewBox="0 0 18 18"><path d="M2 12l7-7 7 7" fill="none" stroke="#cf9a12" stroke-width="2" /></svg></button>
          <button class="plain" aria-label="Options"><svg class="i18" viewBox="0 0 18 18"><path d="M1 3l13-2 3 14-13 2Z" fill="#fff" stroke="#555" stroke-width="1.300" /><path d="M5 9l3 4 5-9" fill="none" stroke="#cf9a12" stroke-width="2" /></svg></button>
          <button class="plain help" aria-label="Help"><span>?</span><svg class="i8" viewBox="0 0 8 8"><path d="M0 2h8L4 6Z" fill="#222" /></svg></button>
        </div>
      </nav>
    </header>

    <section class="ribbon">
      <div class="grp g-ns">
        <div class="cols">
          <div class="col c-create">
            <button class="sb off"><svg><use href="#ns-create" /></svg>Create</button>
            <select disabled aria-label="Named selection"></select>
          </div>
          <div class="col c-ns">
            <button class="sb" aria-label="Add to selection"><svg><use href="#ns-add1" /></svg></button>
            <button class="sb" aria-label="Append"><svg><use href="#ns-plus" /></svg></button>
            <button class="sb" aria-label="Remove"><svg><use href="#ns-minus" /></svg></button>
          </div>
          <div class="col c-bulb">
            <button class="sb off"><svg><use href="#bulb" /></svg>Hide Bodies</button>
            <button class="sb off"><svg><use href="#bulb-on" /></svg>Show Bodies</button>
            <button class="sb off"><svg><use href="#bulb-x" /></svg>Hide Others</button>
          </div>
          <div class="col c-sup">
            <button class="sb off"><svg><use href="#sup" /></svg>Suppress Bodies</button>
            <button class="sb off"><svg><use href="#unsup" /></svg>Unsuppress Bodies</button>
            <button class="sb off"><svg><use href="#supo" /></svg>Suppress Others</button>
          </div>
        </div>
        <div class="glabel">Named Selections</div>
      </div>
      <div class="grp g-ext">
        <div class="cols">
          <button class="bb off w76"><svg><use href="#adj" /></svg>Adjacent</button>
          <div class="col">
            <button class="sb off"><svg><use href="#limits" /></svg>Limits</button>
            <button class="sb off"><svg><use href="#conn" /></svg>Connection</button>
            <button class="sb off"><svg><use href="#inst" /></svg>Instances</button>
          </div>
        </div>
        <div class="glabel">Extend To</div>
      </div>
      <div class="grp g-sel">
        <div class="cols pl4">
          <button class="bb w57"><svg viewBox="0 0 38 38"><path d="M1.500 2 27 1.500 36.500 10V36.500H12L1.500 27Z" fill="#fff" stroke="#3a3a3a" stroke-width="2.600" /><path d="M5 1l10 9v27M14 1l10 9M21 1l9 9M5 5v25M9 8v27M2 10l10 9M2 18l10 9M6 6h25M12 15h24M16 10v27M32 10v27" fill="none" stroke="#5b9bea" stroke-width="1.300" /><path d="M1.500 2 12 10.500H36.500M12 10.500V37" fill="none" stroke="#3a3a3a" stroke-width="2.600" /><path d="M14 15h20v17H14Z" fill="#fff" /><text x="13" y="32" font-family="Open Sans, sans-serif" font-weight="700" font-size="19" fill="#c9990c">ID</text></svg>Mesh<br />by Id</button>
          <button class="bb w57"><svg><use href="#loc" /></svg>Location<i class="dd"></i></button>
          <button class="bb w57"><svg><use href="#size" /></svg>Size<i class="dd"></i></button>
          <button class="bb off w48"><svg><use href="#invert" /></svg>Invert</button>
          <div class="col c-faces">
            <button class="sb off"><svg><use href="#cedge" /></svg>Common Edges</button>
            <button class="sb"><svg><use href="#cyl" /></svg>Cylindrical Faces</button>
            <button class="sb topo">Shared Topology<i class="dd"></i></button>
          </div>
          <div class="col">
            <button class="sb off"><svg><use href="#smat" /></svg>Same Material</button>
            <button class="sb off"><svg><use href="#grow" /></svg>Grow Element</button>
          </div>
        </div>
        <div class="glabel">Select</div>
        <button class="plain more" aria-label="Select options"><svg class="i12" viewBox="0 0 12 12"><path d="M1.500 10V2H10" fill="none" stroke="#666" stroke-width="1.300" /><path d="M5 5l4 4" stroke="#444" stroke-width="1.500" /><path d="M11 5v6H5Z" fill="#444" /></svg></button>
      </div>
      <div class="grp g-conv">
        <div class="cols pl11">
          <div class="col w78">
            <button class="sb off"><svg><use href="#cv-body" /></svg>Bodies</button>
            <button class="sb off"><svg><use href="#cv-wire" /></svg>Faces</button>
            <label class="shared"><input type="checkbox" />Shared</label>
          </div>
          <div class="col">
            <button class="sb off"><svg><use href="#cv-wire" /></svg>Edges</button>
            <button class="sb off"><svg><use href="#cv-wire" /></svg>Vertices</button>
          </div>
        </div>
        <div class="glabel">Convert To</div>
      </div>
      <div class="grp g-walk">
        <div class="cols pl4">
          <button class="bb off w57"><svg><use href="#start" /></svg>Start</button>
          <div class="col w84">
            <button class="sb off"><svg><use href="#a-left" /></svg>Previous</button>
            <button class="sb off"><svg><use href="#a-first" /></svg>First</button>
            <button class="sb off">Reselect All</button>
          </div>
          <div class="col">
            <button class="sb off"><svg><use href="#a-right" /></svg>Next</button>
            <button class="sb off"><svg><use href="#a-last" /></svg>Last</button>
          </div>
        </div>
        <div class="glabel">Walk</div>
      </div>
      <div class="grp g-tree">
        <div class="cols pl4"><button class="bb w57"><svg><use href="#goto" /></svg>GoTo<i class="dd"></i></button></div>
        <div class="glabel">Tree Select</div>
      </div>
      <div class="grp g-tools">
        <div class="cols mid"><button class="bb w57"><svg><use href="#wiz" /></svg>Scoping<br />Wizard</button></div>
        <div class="glabel">Tools</div>
      </div>
    </section>

    <main class="body">
      <aside class="left">
        <section class="outline">
          <div class="phead"><h2>Outline</h2><i class="dots"></i><button v-for="b in ['tri', 'pin', 'max', 'close']" :key="b" :aria-label="b"><svg><use :href="'#' + b" /></svg></button></div>
          <div class="otools">
            <i class="grip"></i>
            <select aria-label="Filter by"><option>Name</option></select>
            <input type="text" placeholder="Search Outline" aria-label="Search Outline" />
            <button class="plain" aria-label="Expand"><svg class="i18" viewBox="0 0 18 18"><path d="M2 5l7 7 7-7" fill="none" stroke="#cf9a12" stroke-width="2" /></svg></button>
            <i class="over"></i>
          </div>
          <ul class="tree">
            <li class="root"><svg viewBox="0 0 18 18"><path d="M1 1h16v16H1Z" fill="#cc9a0a" stroke="#666" /><path d="M1 1h5v16H1Z" fill="#ddd" stroke="#666" /><path d="M2 3h4M2 6h4M2 9h4M2 12h4M2 15h4" stroke="#555" /></svg><b>Project*</b></li>
            <li v-for="r in tree" :key="r.label">
              <i v-for="n in r.level - 1" :key="n" class="cell"></i>
              <i class="cell own" :class="{ last: r.last }"><span v-if="r.exp" class="exp" :class="{ plus: r.exp === '+' }"></span></i>
              <svg class="st"><use v-if="r.status" :href="'#st-' + r.status" /></svg>
              <svg><use :href="'#' + r.icon" /></svg>
              <span class="lbl" :class="{ bold: r.bold, sel: r.selected }">{{ r.label }}</span>
            </li>
          </ul>
        </section>
        <section class="details">
          <div class="phead"><h2>Details of "Solution (A6)"</h2><i class="dots"></i><button v-for="b in ['tri', 'pin', 'max', 'close']" :key="b" :aria-label="b"><svg><use :href="'#' + b" /></svg></button></div>
          <table>
            <colgroup><col class="k0" /><col class="k1" /><col /></colgroup>
            <tbody>
              <tr v-for="d in details" :key="d.label">
                <td class="gut"><span v-if="d.group" class="exp"></span></td>
                <th v-if="d.group" colspan="2">{{ d.label }}</th>
                <template v-else>
                  <td><label v-if="d.check"><input type="checkbox" />{{ d.label }}</label><template v-else>{{ d.label }}</template></td>
                  <td :class="{ ro: d.ro }">{{ d.value }}</td>
                </template>
              </tr>
            </tbody>
          </table>
        </section>
      </aside>

      <div class="center">
        <div class="gtools">
          <i class="grip"></i>
          <button class="tb" aria-label="Previous view"><svg><use href="#z-prev" /></svg></button><button class="tb" aria-label="Next view"><svg><use href="#z-next" /></svg></button><i class="sep"></i>
          <button class="tb on" aria-label="Shaded with edges"><svg><use href="#v-shade" /></svg></button><button class="tb" aria-label="Shaded"><svg><use href="#v-solid" /></svg></button><button class="tb" aria-label="Swap view"><svg><use href="#v-iso" /></svg></button><i class="sep"></i>
          <button class="tb" aria-label="Viewports"><svg><use href="#v-split" /></svg></button><i class="sep"></i>
          <button class="tb" aria-label="Rotate"><svg><use href="#v-rot" /></svg></button><i class="dd w14"></i>
          <button class="tb" aria-label="Pan"><svg><use href="#v-pan" /></svg></button><button class="tb" aria-label="Zoom"><svg><use href="#z-zoom" /></svg></button><button class="tb" aria-label="Box zoom"><svg><use href="#z-in" /></svg></button><button class="tb" aria-label="Zoom to fit"><svg><use href="#z-fit" /></svg></button><button class="tb" aria-label="Zoom to selection"><svg><use href="#z-sel" /></svg></button><button class="tb" aria-label="Magnifier"><svg><use href="#z-zoom" /></svg></button><i class="sep wide"></i>
          <span class="seltxt">Select</span>
          <button class="tx"><svg><use href="#v-mode" /></svg>Mode<i class="dd"></i></button>
          <div class="picks">
            <button v-for="p in pickIcons" :key="p" class="tb" :class="{ on: p === 'f-face' }" :aria-label="p">
              <svg v-if="p === 'f-xyz'" viewBox="0 0 20 20"><text x="1" y="6" font-size="7" font-family="Open Sans, sans-serif" fill="#555">X.Y.Z</text><path d="M8 9l7 4-3 1 2 4-2 1-2-4-2 2Z" fill="#cf9a12" /></svg>
              <svg v-else-if="p === 'f-label'" viewBox="0 0 20 20"><path d="M1 1h14l3 3.500-3 3.500H1Z" fill="#fff" stroke="#444" /><text x="3" y="7" font-size="6" font-weight="700" font-family="Open Sans, sans-serif" fill="#444">100</text><path d="M8 9l7 4-3 1 2 4-2 1-2-4-2 2Z" fill="#cf9a12" /></svg>
              <svg v-else-if="p === 'f-abc'" viewBox="0 0 20 20"><path d="M3 2h12l3 6-3 6-4 4v-4H3Z" fill="#d5d5d5" stroke="#aaa" stroke-width="1.300" /><text x="4" y="11" font-size="7" font-weight="700" font-family="Open Sans, sans-serif" fill="#888">Abc</text></svg>
              <svg v-else><use :href="'#' + p" /></svg>
            </button>
          </div>
          <i class="sep"></i><button class="tb" aria-label="Chart"><svg><use href="#chart" /></svg></button><i class="sep"></i>
          <button class="tx"><svg><use href="#clip" /></svg>Clipboard<i class="dd"></i></button>
          <span class="empty">[ Empty ]</span><i class="sep"></i>
          <button class="tx extb"><svg><use href="#ext" /></svg>Extend<i class="dd"></i></button>
          <button class="tx selb"><svg><use href="#loc" /></svg>Select By<i class="dd"></i></button>
          <button class="tx"><svg><use href="#conv" /></svg>Convert<i class="dd"></i></button>
          <i class="over"></i>
        </div>

        <div class="view">
          <svg class="model" viewBox="416 204 1504 559" preserveAspectRatio="xMidYMid slice">
            <defs>
              <linearGradient v-for="m in members" :id="m.id" :key="m.id" gradientUnits="userSpaceOnUse" :x1="m.g1[0]" :y1="m.g1[1]" :x2="m.g2[0]" :y2="m.g2[1]">
                <stop offset="0" :stop-color="m.dark" /><stop offset=".15" :stop-color="m.dark" /><stop offset=".34" :stop-color="m.mid" /><stop offset=".42" :stop-color="m.lite" /><stop offset=".52" :stop-color="m.main" /><stop offset=".9" :stop-color="m.main" /><stop offset="1" :stop-color="m.edge" />
              </linearGradient>
            </defs>
            <g v-for="m in members" :key="m.id" fill="none">
              <template v-if="m.curve">
                <path :d="m.curve" :stroke="m.edge" :stroke-width="m.w + 1" />
                <path :d="m.curve" :stroke="m.dark" :stroke-width="m.w - 1" />
                <path :d="m.curve" :stroke="m.mid" :stroke-width="m.w - 3" />
                <path :d="m.curve" :stroke="m.main" :stroke-width="m.w - 5" />
              </template>
              <polygon v-else :points="m.poly" :fill="`url(#${m.id})`" :stroke="m.edge" stroke-width=".8" />
            </g>
            <circle cx="910" cy="708" r="6" fill="#e8bd94" stroke="#f7dcc0" />
            <ellipse cx="1245" cy="680" rx="2.500" ry="5" fill="#6c8bb0" />
            <ellipse cx="1275" cy="660" rx="2.500" ry="5" fill="#8a8a8a" />
          </svg>
          <div class="info"><b>A: Static Structural</b><span>Solution</span><span>Time: 1. s</span><span>18-07-2023 12:28</span></div>
          <div class="brand"><strong>Ansys</strong><span>2023 R1</span><hr /><em>STUDENT</em></div>
          <div class="scale">
            <div class="nums top"><span>0.000</span><span>0.500</span><span>1.000 (m)</span></div>
            <div class="bar"><i></i><i></i><i></i><i></i></div>
            <div class="nums bot"><span>0.250</span><span>0.750</span></div>
          </div>
          <svg class="triad" viewBox="0 0 148 132">
            <defs>
              <radialGradient id="gc" cx=".4" cy=".35"><stop offset="0" stop-color="#6ff" /><stop offset=".4" stop-color="#19c0c0" /><stop offset="1" stop-color="#087a7a" /></radialGradient>
              <radialGradient id="gb" cx=".4" cy=".35"><stop offset="0" stop-color="#55f" /><stop offset="1" stop-color="#0000a0" /></radialGradient>
              <linearGradient id="gr" x1="0" y1="0" x2="0" y2="1"><stop offset="0" stop-color="#d01010" /><stop offset="1" stop-color="#7a0000" /></linearGradient>
              <linearGradient id="gg"><stop offset="0" stop-color="#00b000" /><stop offset="1" stop-color="#005a00" /></linearGradient>
            </defs>
            <path d="M54 107 48 50" stroke="#0a7a0a" stroke-width="4" /><path d="M46 30l8 20-8 2-8-1Z" fill="url(#gg)" />
            <path d="M54 107h54" stroke="#9a0808" stroke-width="4" /><path d="M107 98l21 8-21 9Z" fill="url(#gr)" />
            <path d="M54 107 34 120" stroke="#1010c0" stroke-width="4" />
            <circle cx="71" cy="79" r="8" fill="url(#gc)" />
            <g font-family="Open Sans, sans-serif" font-size="14"><text x="44" y="17" fill="#12b012">Y</text><text x="138" y="107" fill="#f33">X</text><text x="20" y="127" fill="#22f">Z</text></g>
            <circle cx="32" cy="121" r="7.500" fill="url(#gb)" />
          </svg>
        </div>

        <div class="bottom">
          <section class="msgs">
            <div class="phead"><h2>Messages</h2><i class="dots"></i><button v-for="b in ['tri', 'pin', 'max', 'close']" :key="b" :aria-label="b"><svg><use :href="'#' + b" /></svg></button></div>
            <div class="mtools">
              <i class="grip"></i>
              <label v-for="f in filters" :key="f.label"><input v-model="f.on" type="checkbox" />{{ f.label }}<span v-if="f.count">{{ f.count }}</span></label>
              <i class="over"></i>
            </div>
            <div class="mbox">
              <table>
                <colgroup><col class="m0" /><col class="m1" /><col /></colgroup>
                <thead><tr><th></th><th>Text</th><th>Association</th></tr></thead>
                <tbody><tr><td>Error</td><td>Your product license has numerical problem size limits, you have exceeded these problem</td><td class="white">Project&gt;Model&gt;Static Structural&gt;Solution</td></tr></tbody>
              </table>
            </div>
            <div class="hscroll"><i></i></div>
            <nav class="btabs"><button>Selection Information</button><button>Graph</button><button class="on">Messages</button></nav>
          </section>
          <section class="tabular">
            <div class="phead"><h2>Tabular Data</h2><i class="dots"></i><button v-for="b in ['tri', 'pin', 'max', 'close']" :key="b" :aria-label="b"><svg><use :href="'#' + b" /></svg></button></div>
          </section>
        </div>
      </div>
    </main>

    <footer class="status">
      <span>Ready</span>
      <span class="s-msg"><svg viewBox="0 0 20 18"><path d="M1 5h18v9h-10l-4 4v-4H1Z" fill="#f5d37a" stroke="#a88" /><path d="M11 1l7 12H4Z" fill="#d01010" stroke="#fff" stroke-width=".6" /><path d="M11 5v4M11 10v1.500" stroke="#fff" stroke-width="1.600" /></svg>1 Message</span>
      <span class="s-sel">No Selection</span>
      <span class="s-unit"><svg viewBox="0 0 10 8"><path d="M0 7l5-6 5 6Z" fill="#fff" /></svg>Metric (m, kg, N, s, V, A)</span>
      <span>Degrees</span><span>rad/s</span><span>Celsius</span>
    </footer>
  </div>
</template>

<style>
html, body { margin: 0; background: #eeeef2; }
</style>

<style scoped>
.app { height: 100vh; min-height: 900px; display: flex; flex-direction: column; background: #eeeef2; color: #1e1e1e; font: 14px/18px "Open Sans", "Noto Sans", sans-serif; overflow: hidden; }
.app *, .app *::before, .app *::after { box-sizing: border-box; }
button { font: inherit; color: inherit; border: 0; background: none; padding: 0; margin: 0; }
input, select { font: inherit; color: inherit; margin: 0; }
i { font-style: normal; display: block; flex: none; }
h1, h2 { font: inherit; margin: 0; }
svg { display: block; flex: none; }
.defs { position: absolute; width: 0; height: 0; }
.i18 { width: 18px; height: 18px; }
.i12 { width: 12px; height: 12px; }
.i8 { width: 8px; height: 8px; }
.dd { width: 0; height: 0; border: 4px solid transparent; border-top: 5px solid #777; border-bottom: 0; }
.over { width: 0; height: 0; border: 5px solid transparent; border-top: 5px solid #222; border-bottom: 0; align-self: flex-end; margin-bottom: 8px; }

/* title bar and tabs */
.titlebar { display: grid; grid-template-columns: 154px 88px 1fr 242px; height: 33px; align-items: center; }
.quick { display: flex; align-items: center; padding-left: 10px; height: 27px; align-self: start; }
.logo { width: 20px; height: 20px; }
.qsep { width: 1px; height: 28px; background: #d2d2dc; margin: 0 8px 0 9px; }
.quick .i12 { margin-left: 6px; }
.context { height: 33px; background: #d5e0f2; border-top: 5px solid #2b579a; text-align: center; color: #3f68b0; line-height: 28px; }
h1 { text-align: center; color: #555; padding-top: 2px; }
.winbtns { display: flex; justify-content: flex-end; padding-right: 1px; }
.winbtns button { width: 42px; display: flex; justify-content: center; }
.winbtns svg { width: 18px; height: 18px; }
.tabs { display: flex; height: 30px; border-bottom: 1px solid #c8c8cc; }
.file { width: 69px; background: #0072c6; color: #fff; margin-right: 7px; }
.tab { position: relative; height: 30px; padding: 2px 0 0; }
.home { width: 78px; } .solution { width: 88px; } .display { width: 86px; } .selection { width: 91px; } .automation { width: 117px; } .add-ons { width: 84px; }
.tab.on { background: #fafafa; border: 1px solid #c8c8cc; border-bottom: 0; }
.launch { margin-left: auto; display: flex; align-items: center; gap: 8px; padding-right: 5px; height: 27px; }
.launch input { width: 200px; height: 26px; border: 1px solid #cfcfdf; padding: 0 4px; background: #fff; margin-right: -4px; }
input::placeholder { color: #a0a0a0; opacity: 1; }
.help { display: flex; align-items: center; }
.help span { width: 18px; height: 18px; border-radius: 9px; background: #4f97ee; color: #fff; font-weight: 700; line-height: 18px; }

/* ribbon */
.ribbon { display: flex; height: 107px; background: #fafafa; border-bottom: 1px solid #d0d0d4; flex: none; }
.grp { position: relative; padding-top: 5px; display: flex; flex-direction: column; }
.grp::after { content: ""; position: absolute; right: 0; top: 7px; bottom: 8px; width: 1px; background: #c4c4c8; }
.cols { display: flex; height: 78px; }
.pl4 { padding-left: 4px; } .pl11 { padding-left: 11px; } .mid { justify-content: center; }
.glabel { text-align: center; line-height: 16px; white-space: nowrap; }
.g-ns { width: 480px; } .g-ext { width: 182px; } .g-sel { width: 487px; } .g-conv { width: 171px; } .g-walk { width: 209px; } .g-tree { width: 78px; } .g-tools { width: 72px; }
.col { display: flex; flex-direction: column; }
.w78 { width: 78px; } .w84 { width: 84px; padding-left: 2px; } .w57 { width: 57px; } .w48 { width: 48px; } .w76 { width: 75px; }
.g-walk .w57 { width: 60px; }
.c-create { width: 164px; padding-left: 10px; border-right: 1px solid #d4d4e0; }
.c-create .sb { padding-left: 4px; }
.c-create select { width: 150px; height: 26px; border: 1px solid #cfcfe0; appearance: none; background: #ebebf1 url("data:image/svg+xml,%3Csvg xmlns='http://www.w3.org/2000/svg' viewBox='0 0 8 6'%3E%3Cpath d='M0 0h8L4 5Z' fill='%23c3c3d3'/%3E%3C/svg%3E") no-repeat right 5px center / 8px 6px; }
.c-ns { width: 34px; padding-left: 7px; border-right: 1px solid #d4d4e0; }
.c-bulb { width: 120px; padding-left: 8px; border-right: 1px solid #d4d4e0; }
.c-sup { padding-left: 8px; }
.c-faces { width: 143px; padding-left: 8px; }
.sb { display: flex; align-items: center; gap: 2px; height: 26px; white-space: nowrap; }
.sb svg { width: 18px; height: 18px; }
.off { color: #a0a0a0; }
.topo { padding-left: 2px; gap: 2px; }
.bb { display: flex; flex-direction: column; align-items: center; padding-top: 3px; line-height: 14px; text-align: center; white-space: nowrap; }
.bb svg { width: 38px; height: 38px; margin-bottom: 8px; }
.bb .dd { margin-top: 8px; }
.shared { display: flex; align-items: center; gap: 8px; height: 26px; }
.more { position: absolute; right: 3px; bottom: 8px; }
input[type=checkbox] { appearance: none; background: #fff; border: 1px solid #cfcfe0; width: 16px; height: 16px; }

/* panels */
.body { display: flex; flex: 1; min-height: 0; }
.left { width: 411px; flex: none; display: flex; flex-direction: column; gap: 7px; padding-top: 1px; }
.outline { flex: 1; display: flex; flex-direction: column; min-height: 0; }
.phead { display: flex; align-items: center; height: 25px; padding: 0 5px 1px; border: solid #d2d2e0; border-width: 1px 1px 0 1px; color: #555; flex: none; }
.phead button { width: 20px; }
.phead button svg { width: 18px; height: 18px; margin: 0 auto; }
.dots { flex: 1; height: 7px; margin: 0 0 0 6px; }
.grip { width: 7px; height: 22px; }
.dots, .grip { background-image: radial-gradient(circle at 1px 1px, #b4b4bc 1px, transparent 1px), radial-gradient(circle at 3px 3px, #b4b4bc 1px, transparent 1px); background-size: 4px 4px; opacity: .8; }
.otools { display: flex; align-items: center; height: 33px; padding-left: 12px; flex: none; }
.otools select { margin-left: 9px; width: 125px; }
.otools select, .otools input { height: 28px; border: 1px solid #cfcfe0; background: #fff; padding: 0 3px; }
.otools select { appearance: none; background: #fff url("data:image/svg+xml,%3Csvg xmlns='http://www.w3.org/2000/svg' viewBox='0 0 8 6'%3E%3Cpath d='M0 0h8L4 5Z' fill='%23777'/%3E%3C/svg%3E") no-repeat right 5px center / 8px 6px; }
.otools input { width: 113px; margin-left: -1px; }
.otools .plain { margin: 0 6px 0 5px; }
.tree { flex: 1; margin: 0; padding: 1px 0 0; list-style: none; background: #fff; font-family: "DejaVu Sans Condensed", "DejaVu Sans", sans-serif; font-size: 13px; color: #000; overflow: hidden; }
.tree li { display: flex; align-items: center; height: 20px; }
.tree li svg { width: 18px; height: 18px; }
.tree li .st { width: 11px; overflow: visible; }
.root { padding-left: 12px; gap: 7px; }
.root b, .bold { font-weight: 700; font-size: 14px; }
.cell { width: 34px; height: 20px; position: relative; }
.own::before { content: ""; position: absolute; left: 15px; top: 0; bottom: 0; border-left: 1px dotted #888; }
.own.last::before { bottom: 10px; }
.own::after { content: ""; position: absolute; left: 16px; right: 0; top: 10px; border-top: 1px dotted #888; }
.exp { position: absolute; z-index: 1; left: 10px; top: 5px; width: 11px; height: 11px; border: 1px solid #888; background: linear-gradient(#000, #000) center / 5px 1px no-repeat #fff; }
.exp.plus { background: linear-gradient(#000, #000) center / 5px 1px no-repeat, linear-gradient(#000, #000) center / 1px 5px no-repeat, #fff; }
.lbl { margin-left: 4px; padding: 0 2px; line-height: 20px; }
.sel { background: #eee; }

.details { height: 327px; background: #fff; flex: none; }
.details .phead { background: #eeeef2; }
.details table { width: 100%; border-collapse: collapse; table-layout: fixed; color: #111; font-size: 13px; font-family: "Noto Sans", sans-serif; }
.k0 { width: 17px; } .k1 { width: 171px; }
.details td, .details th { border: 1px solid #a5a5a5; padding: 0 4px; text-align: left; line-height: 20px; height: 22px; white-space: nowrap; }
.details tr:nth-child(even) td { height: 23px; }
.details th { font-weight: 700; color: #000; }
.details td.gut { position: relative; border: 0; padding: 0; }
.gut .exp { left: 2px; top: 6px; }
.details .ro { background: #e6e5e0; }
.details label { display: flex; align-items: center; gap: 5px; }
.details label input { width: 15px; height: 15px; border-color: #bbb; }

/* graphics toolbar */
.center { flex: 1; min-width: 0; display: flex; flex-direction: column; padding-left: 5px; }
.gtools { display: flex; align-items: center; height: 34px; flex: none; padding-left: 13px; }
.gtools > .grip { margin-right: 7px; }
.tb { width: 27px; height: 27px; display: flex; align-items: center; justify-content: center; flex: none; border: 1px solid transparent; }
.tb svg, .tx svg { width: 20px; height: 20px; }
.tb.on { border: 2px solid #4ba0ee; background: #f6f9fd; }
.sep { width: 1px; height: 26px; background: #d0d0da; margin: 0 4px; }
.sep.wide { margin: 0 8px; }
.w14 { margin: 0 3px; }
.picks { display: flex; justify-content: space-between; width: 304px; margin-left: 12px; }
.tx { display: flex; align-items: center; gap: 3px; white-space: nowrap; }
.seltxt { margin-right: 6px; }
.empty { margin: 0 4px 0 16px; }
.extb { margin-left: 4px; } .selb { margin: 0 14px; }
.gtools .over { margin: 0 0 6px 11px; }

/* viewport */
.view { position: relative; flex: 1; min-height: 0; overflow: hidden; background: linear-gradient(#6a8bde 0%, #8fa7e8 28%, #b3c4f0 52%, #d5dff6 74%, #eef2fc 90%, #fff 100%); color: #000; }
.model { width: 100%; height: 100%; }
.info { position: absolute; left: 19px; top: 17px; display: flex; flex-direction: column; line-height: 19px; }
.info b { font-weight: 700; }
.brand { position: absolute; right: 10px; top: 0; width: 138px; color: #fff; text-align: right; font-weight: 700; }
.brand strong { display: block; font-size: 46px; line-height: 56px; font-weight: 700; }
.brand span { display: block; font-size: 22px; line-height: 22px; }
.brand hr { border: 0; height: 2px; background: #dbe4fa; margin: 4px 0 5px; }
.brand em { display: block; font-style: normal; font-size: 24px; line-height: 22px; text-align: center; padding-right: 10px; }
.scale { position: absolute; left: 50%; bottom: 20px; width: 408px; margin-left: -205px; }
.bar { display: flex; height: 11px; border: 1px solid #555; background: #f3f6fd; }
.bar i { flex: 1; } .bar i:nth-child(odd) { background: #000; }
.nums { display: flex; justify-content: space-between; line-height: 18px; white-space: nowrap; }
.nums span { width: 40px; text-align: center; }
.top { margin: 0 -20px 1px; } .top span:last-child { text-align: left; }
.bot { padding: 1px 82px 0; }
.triad { position: absolute; right: 15px; bottom: 74px; width: 148px; height: 132px; }

/* bottom panels */
.bottom { display: flex; gap: 5px; height: 227px; margin-top: 5px; flex: none; }
.msgs { flex: 914 1 0; min-width: 0; display: flex; flex-direction: column; }
.tabular { flex: 585 1 0; min-width: 0; background: #a0a0a0; }
.tabular .phead { background: #eeeef2; }
.mtools { display: flex; align-items: center; height: 33px; padding-left: 14px; white-space: nowrap; }
.mtools label { display: flex; align-items: center; gap: 8px; margin-left: 10px; }
.mtools label span { margin-left: 2px; }
.mtools input:checked { background: #fff url("data:image/svg+xml,%3Csvg xmlns='http://www.w3.org/2000/svg' viewBox='0 0 14 14'%3E%3Cpath d='M3 7l3 4 5-9' fill='none' stroke='%23555' stroke-width='2'/%3E%3C/svg%3E"); }
.mtools .over { margin-left: 6px; }
.mbox { flex: 1; background: #a0a0a0; overflow: hidden; }
.mbox table { width: 100%; border-collapse: collapse; table-layout: fixed; color: #000; font-size: 13px; font-family: "Noto Sans", sans-serif; }
.m0 { width: 62px; } .m1 { width: 582px; }
.mbox th, .mbox td { font-weight: 400; text-align: left; padding: 0 4px; line-height: 18px; height: 19px; overflow: hidden; white-space: nowrap; background: #f0f0f0; border-right: 1px solid #888; border-bottom: 1px solid #888; }
.mbox .white { background: #fff; }
.hscroll { height: 21px; background: #f0f0f0; padding: 10px 294px 0 21px; }
.hscroll i { height: 3px; background: #8a8a8a; }
.btabs { display: flex; height: 23px; border-top: 1px solid #d2d2e0; color: #555; }
.btabs button { padding: 0 8px; line-height: 18px; }
.btabs .on { background: #fafafa; border: solid #d2d2e0; border-width: 0 1px 1px; color: #0e70c0; }

.status { height: 24px; flex: none; display: flex; align-items: center; gap: 16px; background: #007acc; color: #fff; padding: 3px 10px 0; white-space: nowrap; }
.status svg { width: 20px; height: 18px; }
.s-msg { margin-left: auto; display: flex; gap: 3px; }
.s-sel { margin: 0 16px 0 6px; }
.s-unit { display: flex; align-items: center; gap: 8px; }
.status .s-unit svg { width: 10px; height: 8px; }
</style>
